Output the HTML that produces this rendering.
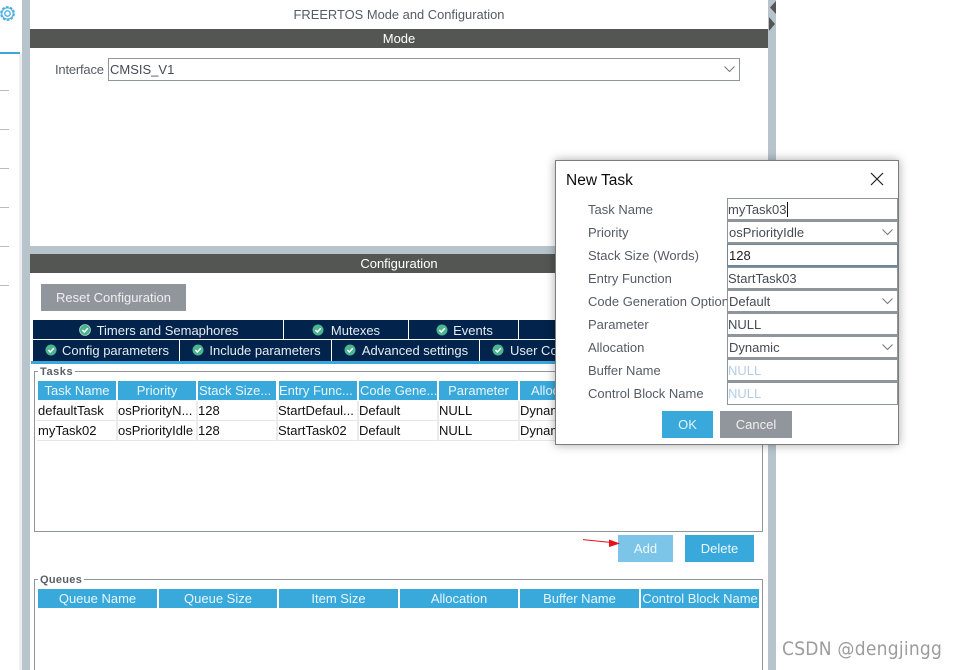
<!DOCTYPE html>
<html><head><meta charset="utf-8"><style>
html,body{margin:0;padding:0;background:#fff}
#p{position:relative;width:957px;height:670px;overflow:hidden;background:#fff;font-family:"Liberation Sans",sans-serif;font-size:13px;color:#111}
#p div{position:absolute;box-sizing:border-box;white-space:nowrap}
.c{text-align:center}
.hd{background:#39a9dc;color:#e8f6fc;height:19px;line-height:20px;text-align:center;overflow:hidden}
.bar{background:#545654;color:#fff;line-height:20px;text-align:center;height:19px;left:30px;width:738px}
.tick{left:0;width:9px;height:1px;background:#bbb}
.tab{background:#02234b;color:#e4edf2;text-align:center;padding-left:19px}
.cell{height:19px;line-height:19px;color:#111}
.lbl{left:588px;color:#555c66;height:20px;line-height:21px}
.f{left:727px;width:171px;height:23px;border:2px solid #8f969b;border-width:1px 1px 2px 1px;line-height:21px;padding-left:0;background:#fff;color:#444b55}
svg{position:absolute;overflow:visible}
</style></head><body><div id="p">
<div style="left:19px;top:54px;width:3px;height:616px;background:#eceeef"></div>
<div style="left:22px;top:0;width:8px;height:670px;background:#b8c4cc"></div>
<div style="left:768px;top:0;width:8px;height:670px;background:#b8c4cc"></div>
<div style="left:0;top:52px;width:20px;height:2px;background:#39a9dc"></div>
<div class="tick" style="top:90px"></div><div class="tick" style="top:129px"></div><div class="tick" style="top:168px"></div><div class="tick" style="top:207px"></div><div class="tick" style="top:246px"></div><div class="tick" style="top:285px"></div>
<svg style="left:0;top:5px" width="16" height="17" viewBox="0 0 16 17"><circle cx="7.5" cy="8.5" r="6.5" fill="none" stroke="#4aaee0" stroke-width="1.8" stroke-dasharray="2.8 1.3"/><circle cx="7.5" cy="8.5" r="5.6" fill="none" stroke="#4aaee0" stroke-width="1"/><circle cx="7.5" cy="8.5" r="2.7" fill="none" stroke="#4aaee0" stroke-width="1.4"/></svg>
<svg style="left:768px;top:0" width="9" height="32" viewBox="0 0 9 32"><path d="M8 1L2 7.5L8 14Z" fill="#555"/><path d="M1 17L7 24L1 31Z" fill="#555"/></svg>

<div class="c" style="left:30px;width:738px;top:7px;height:15px;line-height:16px;color:#555c66;font-size:12.9px">FREERTOS Mode and Configuration</div>
<div class="bar" style="top:29px">Mode</div>
<div style="left:55px;top:60px;height:18px;line-height:19px;color:#555c66;letter-spacing:-.2px">Interface</div>
<div style="left:108px;top:58px;width:632px;height:23px;border:1px solid #8f969b;line-height:22px;padding-left:1px;color:#444b55">CMSIS_V1</div>
<svg style="left:724px;top:66px" width="11" height="7"><path d="M.5 .5L5.5 5.5L10.5 .5" fill="none" stroke="#777" stroke-width="1"/></svg>

<div style="left:30px;top:246px;width:738px;height:8px;background:#b8c4cc"></div>
<div class="bar" style="top:254px">Configuration</div>
<div class="c" style="left:41px;top:284px;width:145px;height:27px;line-height:28px;background:#90969b;color:#eef0f1">Reset Configuration</div>

<div class="tab" style="left:33px;top:320px;width:250px;height:19px;line-height:21px">Timers and Semaphores</div>
<div class="tab" style="left:284px;top:320px;width:124px;height:19px;line-height:21px">Mutexes</div>
<div class="tab" style="left:409px;top:320px;width:109px;height:19px;line-height:21px">Events</div>
<div class="tab" style="left:519px;top:320px;width:40px;height:19px"></div>
<div class="tab" style="left:33px;top:340px;width:146px;height:21px;line-height:21px">Config parameters</div>
<div class="tab" style="left:180px;top:340px;width:151px;height:21px;line-height:21px">Include parameters</div>
<div class="tab" style="left:332px;top:340px;width:147px;height:21px;line-height:21px">Advanced settings</div>
<div class="tab" style="left:480px;top:340px;width:80px;height:21px;line-height:21px;text-align:left;padding-left:30px;overflow:hidden">User Constants</div>
<svg style="left:0;top:0" width="600" height="362">
<g><circle cx="85" cy="330" r="5.5" fill="#4ab58f" stroke="#cfe8dc" stroke-width=".6"/><path d="M82.3 330l2 2 3.5-3.8" fill="none" stroke="#fff" stroke-width="1.5"/></g>
<g><circle cx="318" cy="330" r="5.5" fill="#4ab58f"/><path d="M315.3 330l2 2 3.5-3.8" fill="none" stroke="#fff" stroke-width="1.5"/></g>
<g><circle cx="442" cy="330" r="5.5" fill="#4ab58f"/><path d="M439.3 330l2 2 3.5-3.8" fill="none" stroke="#fff" stroke-width="1.5"/></g>
<g><circle cx="51" cy="350" r="5.5" fill="#4ab58f"/><path d="M48.3 350l2 2 3.5-3.8" fill="none" stroke="#fff" stroke-width="1.5"/></g>
<g><circle cx="198" cy="350" r="5.5" fill="#4ab58f"/><path d="M195.3 350l2 2 3.5-3.8" fill="none" stroke="#fff" stroke-width="1.5"/></g>
<g><circle cx="350" cy="350" r="5.5" fill="#4ab58f"/><path d="M347.3 350l2 2 3.5-3.8" fill="none" stroke="#fff" stroke-width="1.5"/></g>
<g><circle cx="498" cy="350" r="5.5" fill="#4ab58f"/><path d="M495.3 350l2 2 3.5-3.8" fill="none" stroke="#fff" stroke-width="1.5"/></g>
</svg>
<div style="left:31px;top:361px;width:737px;height:3px;background:#39a9dc"></div>

<div style="left:34px;top:371px;width:729px;height:161px;border:1px solid #8f969b"></div>
<div style="left:38px;top:365px;height:14px;line-height:14px;padding:0 2px;background:#fff;font-size:11px;font-weight:bold;color:#5a6068;letter-spacing:.55px">Tasks</div>
<div class="hd" style="left:38px;top:381px;width:78px">Task Name</div>
<div class="hd" style="left:118px;top:381px;width:78px">Priority</div>
<div class="hd" style="left:198px;top:381px;width:78px;text-align:left;padding-left:1px">Stack Size...</div>
<div class="hd" style="left:279px;top:381px;width:78px;text-align:left">Entry Func...</div>
<div class="hd" style="left:359px;top:381px;width:78px;text-align:left;padding-left:1px">Code Gene...</div>
<div class="hd" style="left:439px;top:381px;width:79px">Parameter</div>
<div class="hd" style="left:520px;top:381px;width:60px;text-align:left;padding-left:11px">Allocation</div>
<div style="left:37px;top:420px;width:525px;height:1px;background:#e4e6e8"></div>
<div style="left:37px;top:440px;width:525px;height:1px;background:#e4e6e8"></div>
<div style="left:116px;top:401px;width:2px;height:40px;background:#e9ebec"></div>
<div style="left:196px;top:401px;width:2px;height:40px;background:#e9ebec"></div>
<div style="left:276px;top:401px;width:2px;height:40px;background:#e9ebec"></div>
<div style="left:357px;top:401px;width:2px;height:40px;background:#e9ebec"></div>
<div style="left:437px;top:401px;width:2px;height:40px;background:#e9ebec"></div>
<div style="left:518px;top:401px;width:2px;height:40px;background:#e9ebec"></div>
<div class="cell" style="left:38px;top:401px">defaultTask</div>
<div class="cell" style="left:118px;top:401px">osPriorityN...</div>
<div class="cell" style="left:198px;top:401px">128</div>
<div class="cell" style="left:278px;top:401px">StartDefaul...</div>
<div class="cell" style="left:359px;top:401px">Default</div>
<div class="cell" style="left:439px;top:401px">NULL</div>
<div class="cell" style="left:520px;top:401px">Dynamic</div>
<div class="cell" style="left:38px;top:421px">myTask02</div>
<div class="cell" style="left:118px;top:421px">osPriorityIdle</div>
<div class="cell" style="left:198px;top:421px">128</div>
<div class="cell" style="left:278px;top:421px">StartTask02</div>
<div class="cell" style="left:359px;top:421px">Default</div>
<div class="cell" style="left:439px;top:421px">NULL</div>
<div class="cell" style="left:520px;top:421px">Dynamic</div>

<div class="c" style="left:618px;top:535px;width:55px;height:27px;line-height:27px;background:#7cc5e8;color:#eef8fc">Add</div>
<div class="c" style="left:685px;top:535px;width:69px;height:27px;line-height:27px;background:#39a9dc;color:#eef8fc">Delete</div>
<svg style="left:582px;top:536px" width="37" height="12"><path d="M1 3.6L28 6.4" stroke="#e8101a" stroke-width="1" fill="none"/><path d="M27 3.5L38 7.5L27 11Z" fill="#e8101a"/></svg>

<div style="left:34px;top:579px;width:729px;height:100px;border:1px solid #8f969b"></div>
<div style="left:38px;top:573px;height:14px;line-height:14px;padding:0 2px;background:#fff;font-size:11px;font-weight:bold;color:#5a6068;letter-spacing:.3px">Queues</div>
<div class="hd" style="left:38px;top:589px;width:119px">Queue Name</div>
<div class="hd" style="left:159px;top:589px;width:118px">Queue Size</div>
<div class="hd" style="left:279px;top:589px;width:119px">Item Size</div>
<div class="hd" style="left:400px;top:589px;width:118px">Allocation</div>
<div class="hd" style="left:520px;top:589px;width:119px">Buffer Name</div>
<div class="hd" style="left:641px;top:589px;width:118px">Control Block Name</div>

<div style="left:782px;top:637px;height:24px;line-height:24px;font-size:19px;color:#9c9c9c;letter-spacing:.25px;font-family:'DejaVu Sans Condensed','Liberation Sans',sans-serif">CSDN @dengjingg</div>

<div style="left:555px;top:160px;width:344px;height:285px;background:#fff;border:1px solid #7d7d7d;box-shadow:0 0 9px rgba(0,0,0,.35)"></div>
<div style="left:566px;top:171px;height:19px;line-height:19px;font-size:15.5px;color:#0d0d0d">New Task</div>
<svg style="left:870px;top:172px" width="14" height="14"><path d="M1 1L13 13M13 1L1 13" stroke="#222" stroke-width="1.2" fill="none"/></svg>
<div class="lbl" style="top:199px">Task Name</div>
<div class="lbl" style="top:222px">Priority</div>
<div class="lbl" style="top:245px">Stack Size (Words)</div>
<div class="lbl" style="top:268px">Entry Function</div>
<div class="lbl" style="top:291px">Code Generation Option</div>
<div class="lbl" style="top:314px">Parameter</div>
<div class="lbl" style="top:337px">Allocation</div>
<div class="lbl" style="top:360px">Buffer Name</div>
<div class="lbl" style="top:383px">Control Block Name</div>
<div class="f" style="top:198px">myTask03<span style="display:inline-block;width:1px;height:15px;background:#111;vertical-align:-3px"></span></div>
<div class="f" style="top:221px;padding-left:1px">osPriorityIdle</div>
<div class="f" style="top:244px;padding-left:1px;color:#222;border-color:#6f8796;border-width:1px 1px 2px 1px">128</div>
<div class="f" style="top:267px">StartTask03</div>
<div class="f" style="top:290px;padding-left:1px">Default</div>
<div class="f" style="top:313px">NULL</div>
<div class="f" style="top:336px;padding-left:1px">Dynamic</div>
<div class="f" style="top:359px;color:#b4cde6">NULL</div>
<div class="f" style="top:382px;color:#b4cde6;border-width:1px">NULL</div>
<svg style="left:882px;top:229px" width="11" height="7"><path d="M.5 .5L5.5 5.5L10.5 .5" fill="none" stroke="#777"/></svg>
<svg style="left:882px;top:298px" width="11" height="7"><path d="M.5 .5L5.5 5.5L10.5 .5" fill="none" stroke="#777"/></svg>
<svg style="left:882px;top:344px" width="11" height="7"><path d="M.5 .5L5.5 5.5L10.5 .5" fill="none" stroke="#777"/></svg>
<div class="c" style="left:662px;top:411px;width:51px;height:27px;line-height:27px;background:#39a9dc;color:#e4f4fb">OK</div>
<div class="c" style="left:720px;top:411px;width:72px;height:27px;line-height:27px;background:#90969b;color:#eef0f1">Cancel</div>
</div></body></html>
